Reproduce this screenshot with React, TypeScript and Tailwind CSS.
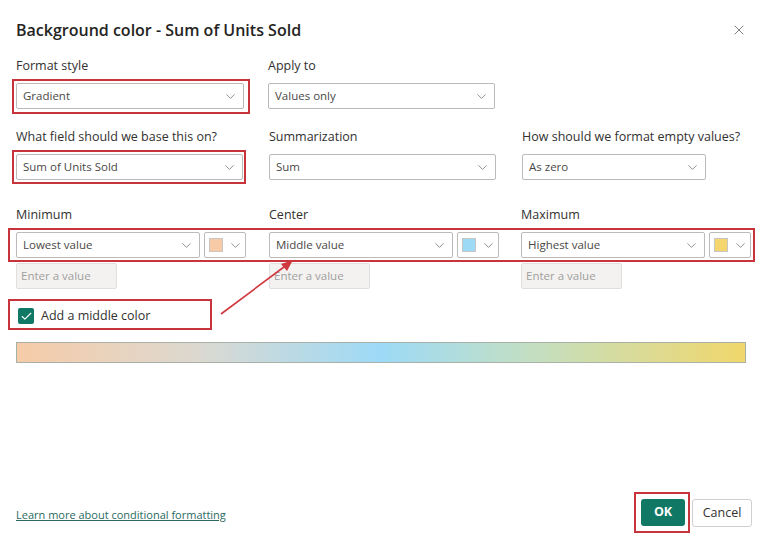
import { ChevronDown, X, Check } from 'lucide-react';

const FONT = { fontFamily: '"Segoe UI", "Open Sans", "Noto Sans", sans-serif' };

function Select({ value, width }: { value: string; width: string }) {
  return (
    <div
      className={`flex h-[26px] ${width} items-center justify-between rounded-[2px] border border-[#bdbbb9] bg-white pl-[6px] pr-[5px]`}
    >
      <span className="text-[11.5px] text-[#4a4846]">{value}</span>
      <ChevronDown size={15} strokeWidth={1.1} color="#605e5c" />
    </div>
  );
}

function ColorPick({ color }: { color: string }) {
  return (
    <div className="flex h-[26px] w-[42px] items-center justify-between rounded-[2px] border border-[#bdbbb9] bg-white pl-[4px] pr-[2px]">
      <span className={`h-[14px] w-[14px] border border-[#c8c6c4] ${color}`} />
      <ChevronDown size={15} strokeWidth={1.1} color="#605e5c" />
    </div>
  );
}

function ValueInput() {
  return (
    <div className="flex h-[26px] w-[101px] items-center rounded-[2px] border border-[#e1dfdd] bg-[#f3f2f1] px-[4px]">
      <span className="text-[11.5px] text-[#a19f9d]">Enter a value</span>
    </div>
  );
}

function Label({ children }: { children: React.ReactNode }) {
  return <div className="h-[18px] text-[12.5px] leading-[20px] text-[#323130]">{children}</div>;
}

export default function App() {
  return (
    <div className="relative flex h-[540px] w-[768px] flex-col bg-white px-4" style={FONT}>
      {/* header */}
      <div className="flex items-center justify-between pt-[19px]">
        <h1 className="text-[16px] font-semibold leading-[22px] text-[#252423]">
          Background color - Sum of Units Sold
        </h1>
        <X size={16} strokeWidth={1.2} color="#605e5c" className="mr-[5px]" />
      </div>

      {/* row 1 */}
      <div className="mt-[15px] flex">
        <div className="w-[252px]">
          <Label>Format style</Label>
          <div className="mt-[9px]">
            <Select value="Gradient" width="w-[228px]" />
          </div>
        </div>
        <div className="w-[253px]">
          <Label>Apply to</Label>
          <div className="mt-[9px]">
            <Select value="Values only" width="w-[227px]" />
          </div>
        </div>
      </div>

      {/* row 2 */}
      <div className="mt-[18px] flex">
        <div className="w-[253px]">
          <Label>What field should we base this on?</Label>
          <div className="mt-[9px]">
            <Select value="Sum of Units Sold" width="w-[227px]" />
          </div>
        </div>
        <div className="w-[253px]">
          <Label>Summarization</Label>
          <div className="mt-[9px]">
            <Select value="Sum" width="w-[227px]" />
          </div>
        </div>
        <div>
          <Label>How should we format empty values?</Label>
          <div className="mt-[9px]">
            <Select value="As zero" width="w-[184px]" />
          </div>
        </div>
      </div>

      {/* row 3 */}
      <div className="mt-[25px] flex">
        <div className="w-[253px]">
          <Label>Minimum</Label>
          <div className="mt-[9px] flex gap-[4px]">
            <Select value="Lowest value" width="w-[184px]" />
            <ColorPick color="bg-[#f8cba6]" />
          </div>
          <div className="mt-[5px]">
            <ValueInput />
          </div>
        </div>
        <div className="w-[252px]">
          <Label>Center</Label>
          <div className="mt-[9px] flex gap-[4px]">
            <Select value="Middle value" width="w-[184px]" />
            <ColorPick color="bg-[#9cdaf6]" />
          </div>
          <div className="mt-[5px]">
            <ValueInput />
          </div>
        </div>
        <div>
          <Label>Maximum</Label>
          <div className="mt-[9px] flex gap-[4px]">
            <Select value="Highest value" width="w-[184px]" />
            <ColorPick color="bg-[#f4d56e]" />
          </div>
          <div className="mt-[5px]">
            <ValueInput />
          </div>
        </div>
      </div>

      {/* checkbox */}
      <div className="mt-[18px] flex h-[18px] items-center gap-[7px] pl-[2px]">
        <span className="flex h-[16px] w-[16px] items-center justify-center rounded-[2px] bg-[#117865]">
          <Check size={13} strokeWidth={2} color="#ffffff" />
        </span>
        <span className="text-[12.5px] leading-[18px] text-[#323130]">Add a middle color</span>
      </div>

      {/* gradient bar */}
      <div className="mt-[17px] h-[21px] w-[730px] border border-[#a8b0a8] bg-[linear-gradient(to_right,#f6cba8_0%,#dcd9d1_25%,#9ddaf7_50%,#c2dfc4_70%,#f1d76c_100%)]" />

      {/* footer */}
      <div className="mt-auto mb-[13px] flex items-center justify-between">
        <a className="mt-[4px] text-[11px] text-[#2b6a61] underline">Learn more about conditional formatting</a>
        <div className="flex gap-[7px]">
          <button className="h-[27px] w-[44px] rounded-[3px] bg-[#117865] text-[12.5px] font-bold text-white">
            OK
          </button>
          <button className="h-[28px] w-[60px] rounded-[3px] border border-[#d2d0ce] bg-white text-[12.5px] font-medium text-[#323130]">
            Cancel
          </button>
        </div>
      </div>

      {/* red annotation boxes */}
      <div className="pointer-events-none absolute left-[12px] top-[79px] h-[35px] w-[238px] border-2 border-[#c8343c]" />
      <div className="pointer-events-none absolute left-[12px] top-[150px] h-[34px] w-[234px] border-2 border-[#c8343c]" />
      <div className="pointer-events-none absolute left-[8px] top-[228px] h-[34px] w-[747px] border-2 border-[#c8343c]" />
      <div className="pointer-events-none absolute left-[8px] top-[299px] h-[31px] w-[204px] border-2 border-[#c8343c]" />
      <div className="pointer-events-none absolute left-[634px] top-[492px] h-[41px] w-[56px] border-2 border-[#c8343c]" />
      <svg className="pointer-events-none absolute left-0 top-0" width="768" height="540">
        <line x1="221" y1="314" x2="288" y2="264" stroke="#d0383f" strokeWidth="1.6" />
        <polygon points="293,260 281,264 287,271" fill="#d0383f" />
      </svg>
    </div>
  );
}
